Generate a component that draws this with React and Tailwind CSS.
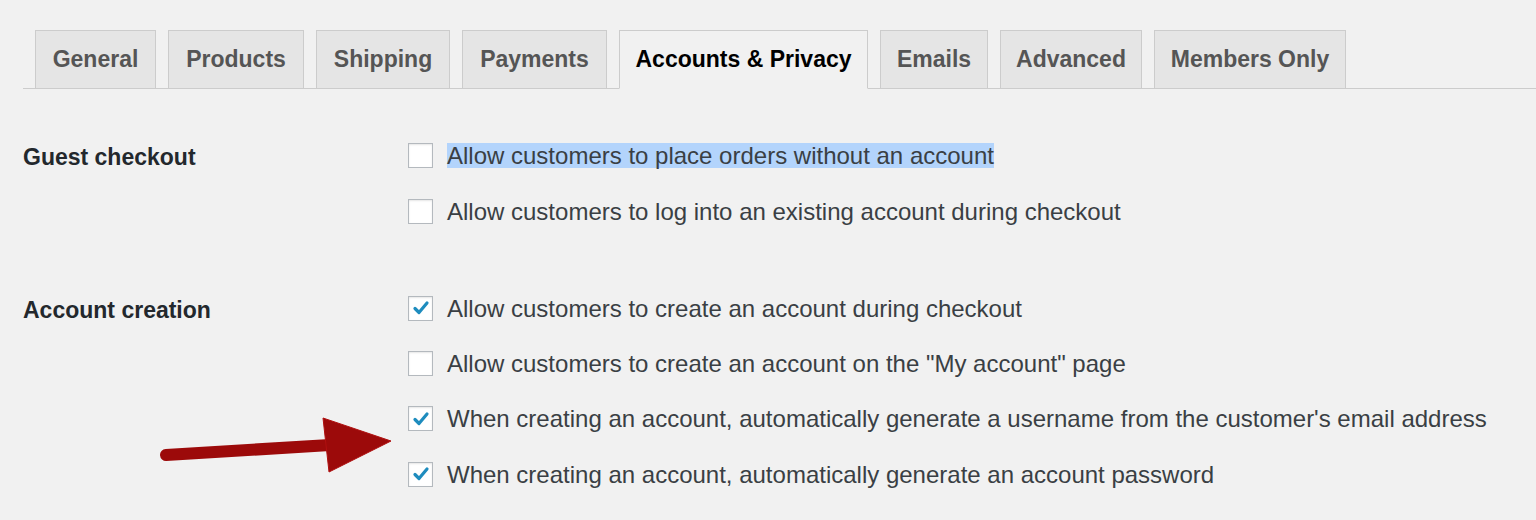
import React from 'react';

const tabs = [
  { label: 'General', w: 'w-[121px]' },
  { label: 'Products', w: 'w-[136px]' },
  { label: 'Shipping', w: 'w-[134px]' },
  { label: 'Payments', w: 'w-[145px]' },
  { label: 'Accounts & Privacy', w: 'w-[249px]', active: true },
  { label: 'Emails', w: 'w-[108px]' },
  { label: 'Advanced', w: 'w-[142px]' },
  { label: 'Members Only', w: 'w-[192px]' },
];

function Checkbox({ checked }) {
  return (
    <span className="w-[25px] h-[25px] shrink-0 bg-white border border-[#b4b9be] shadow-[inset_0_1px_2px_rgba(0,0,0,0.1)] flex items-center justify-center">
      {checked && (
        <svg width="20" height="20" viewBox="0 0 20 20">
          <path d="M4 10.5 L8 14.5 L16 5" fill="none" stroke="#1e8cbe" strokeWidth="3.2" strokeLinecap="round" strokeLinejoin="round" />
        </svg>
      )}
    </span>
  );
}

function Option({ checked, text, highlight, h = 'h-[56px]' }) {
  return (
    <div className={`flex items-center gap-[14px] ${h}`}>
      <Checkbox checked={checked} />
      <span className={highlight ? 'bg-[#b3d4fc] leading-[25px]' : 'leading-[25px]'}>{text}</span>
    </div>
  );
}

export default function App() {
  return (
    <div className="min-h-screen bg-[#f1f1f1] relative text-[#3a3f44] font-['Liberation_Sans',Arial,sans-serif] overflow-hidden">
      {/* tabs */}
      <nav className="flex gap-3 pt-[30px] pl-3 ml-[23px] border-b border-[#ccc]">
        {tabs.map(t => (
          <div
            key={t.label}
            className={
              t.active
                ? `${t.w} h-[59px] -mb-px flex items-center justify-center border border-[#ccc] border-b-[#f1f1f1] bg-[#f1f1f1] text-black text-[23px] font-bold`
                : `${t.w} h-[58px] flex items-center justify-center border border-b-0 border-[#ccc] bg-[#e5e5e5] text-[#555] text-[23px] font-bold`
            }
          >
            {t.label}
          </div>
        ))}
      </nav>

      <div className="pl-[23px] text-[24px]">
        <section className="flex mt-[38px]">
          <div className="w-[385px] h-[56px] flex items-center pt-1 font-bold text-[23px] text-[#23282d]">Guest checkout</div>
          <div>
            <Option text="Allow customers to place orders without an account" highlight />
            <Option text="Allow customers to log into an existing account during checkout" />
          </div>
        </section>

        <section className="flex mt-[41px]">
          <div className="w-[385px] h-[56px] flex items-center pt-1 font-bold text-[23px] text-[#23282d]">Account creation</div>
          <div>
            <Option checked text="Allow customers to create an account during checkout" h="h-[56px]" />
            <Option text={'Allow customers to create an account on the "My account" page'} h="h-[55px]" />
            <Option checked text="When creating an account, automatically generate a username from the customer's email address" h="h-[55px]" />
            <Option checked text="When creating an account, automatically generate an account password" h="h-[56px]" />
          </div>
        </section>
      </div>

      {/* annotation arrow */}
      <svg className="absolute left-[150px] top-[410px]" width="250" height="70" viewBox="150 410 250 70">
        <line x1="166" y1="455" x2="330" y2="445" stroke="#9c0a0a" strokeWidth="12" strokeLinecap="round" />
        <polygon points="323,418 329,472 391,441" fill="#9c0a0a" stroke="#b01010" strokeWidth="1" strokeLinejoin="round" />
      </svg>
    </div>
  );
}
